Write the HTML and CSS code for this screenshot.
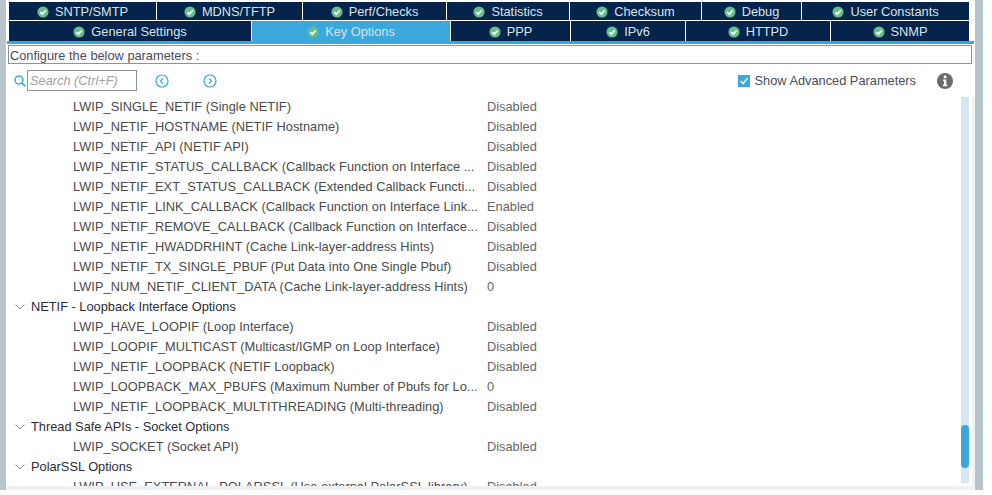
FILE: index.html
```html
<!DOCTYPE html>
<html>
  <head>
    <title>Key Options</title>
    <link rel="stylesheet" href="styles.css">
  </head>
  <body>
    <svg class="defs" width="0" height="0">
      <symbol id="ok" viewBox="0 0 14 14">
        <circle cx="7" cy="7" r="6.5" fill="#62c08a" />
        <path d="M3.8 7.2 L6.2 9.5 L10.3 4.9" fill="none" stroke="#fff" stroke-width="2" />
      </symbol>
    </svg>
    <div class="window">
      <div class="tabs tabs-top">
        <div class="tab t1"><svg class="ok"><use href="#ok" /></svg>SNTP/SMTP</div>
        <div class="tab t2"><svg class="ok"><use href="#ok" /></svg>MDNS/TFTP</div>
        <div class="tab t3"><svg class="ok"><use href="#ok" /></svg>Perf/Checks</div>
        <div class="tab t4"><svg class="ok"><use href="#ok" /></svg>Statistics</div>
        <div class="tab t5"><svg class="ok"><use href="#ok" /></svg>Checksum</div>
        <div class="tab t6"><svg class="ok"><use href="#ok" /></svg>Debug</div>
        <div class="tab t7"><svg class="ok"><use href="#ok" /></svg>User Constants</div>
      </div>
      <div class="tabs tabs-bottom">
        <div class="tab b1"><svg class="ok"><use href="#ok" /></svg>General Settings</div>
        <div class="tab b2 active"><svg class="ok"><use href="#ok" /></svg>Key Options</div>
        <div class="tab b3"><svg class="ok"><use href="#ok" /></svg>PPP</div>
        <div class="tab b4"><svg class="ok"><use href="#ok" /></svg>IPv6</div>
        <div class="tab b5"><svg class="ok"><use href="#ok" /></svg>HTTPD</div>
        <div class="tab b6"><svg class="ok"><use href="#ok" /></svg>SNMP</div>
      </div>
      <div class="tab-line"></div>
      <div class="configure">Configure the below parameters :</div>
      <div class="toolbar">
        <svg class="search-icon" viewBox="0 0 12 12">
          <circle cx="5" cy="5" r="3.9" fill="none" stroke="#3aa8dc" stroke-width="1.5" />
          <path d="M7.8 7.8 L11.2 11.2" stroke="#3aa8dc" stroke-width="1.7" />
        </svg>
        <div class="search">Search (Ctrl+F)</div>
        <svg class="nav nav-prev" viewBox="0 0 14 14">
          <circle cx="7" cy="7" r="6" fill="none" stroke="#3aa8dc" stroke-width="1.2" />
          <path d="M8 4.5 L5.5 7 L8 9.5" fill="none" stroke="#3aa8dc" stroke-width="1.2" />
        </svg>
        <svg class="nav nav-next" viewBox="0 0 14 14">
          <circle cx="7" cy="7" r="6" fill="none" stroke="#3aa8dc" stroke-width="1.2" />
          <path d="M6 4.5 L8.5 7 L6 9.5" fill="none" stroke="#3aa8dc" stroke-width="1.2" />
        </svg>
        <div class="spacer"></div>
        <div class="checkbox">
          <svg viewBox="0 0 12 12"><path d="M2.6 6 L5 8.6 L9.6 3.2" fill="none" stroke="#fff" stroke-width="1.5" /></svg>
        </div>
        <div class="advanced">Show Advanced Parameters</div>
        <svg class="info" viewBox="0 0 16 16">
          <circle cx="8" cy="8" r="8" fill="#6b6b6b" />
          <rect x="6.8" y="2.6" width="2.6" height="2.6" fill="#fff" />
          <path d="M5.9 6.6 H9.3 V11.8 H10.3 V13.2 H5.9 V11.8 H6.9 V8 H5.9 Z" fill="#fff" />
        </svg>
      </div>
      <div class="body-area">
        <div class="list">
          <div class="row"><span class="name">LWIP_SINGLE_NETIF (Single NETIF)</span><span class="value">Disabled</span></div>
          <div class="row"><span class="name">LWIP_NETIF_HOSTNAME (NETIF Hostname)</span><span class="value">Disabled</span></div>
          <div class="row"><span class="name">LWIP_NETIF_API (NETIF API)</span><span class="value">Disabled</span></div>
          <div class="row"><span class="name">LWIP_NETIF_STATUS_CALLBACK (Callback Function on Interface ...</span><span class="value">Disabled</span></div>
          <div class="row"><span class="name">LWIP_NETIF_EXT_STATUS_CALLBACK (Extended Callback Functi...</span><span class="value">Disabled</span></div>
          <div class="row"><span class="name">LWIP_NETIF_LINK_CALLBACK (Callback Function on Interface Link...</span><span class="value">Enabled</span></div>
          <div class="row"><span class="name">LWIP_NETIF_REMOVE_CALLBACK (Callback Function on Interface...</span><span class="value">Disabled</span></div>
          <div class="row"><span class="name">LWIP_NETIF_HWADDRHINT (Cache Link-layer-address Hints)</span><span class="value">Disabled</span></div>
          <div class="row"><span class="name">LWIP_NETIF_TX_SINGLE_PBUF (Put Data into One Single Pbuf)</span><span class="value">Disabled</span></div>
          <div class="row"><span class="name">LWIP_NUM_NETIF_CLIENT_DATA (Cache Link-layer-address Hints)</span><span class="value">0</span></div>
          <div class="group"><svg class="chevron" viewBox="0 0 10 6"><path d="M0.5 0.5 L5 5 L9.5 0.5" fill="none" stroke="#8a9299" /></svg>NETIF - Loopback Interface Options</div>
          <div class="row"><span class="name">LWIP_HAVE_LOOPIF (Loop Interface)</span><span class="value">Disabled</span></div>
          <div class="row"><span class="name">LWIP_LOOPIF_MULTICAST (Multicast/IGMP on Loop Interface)</span><span class="value">Disabled</span></div>
          <div class="row"><span class="name">LWIP_NETIF_LOOPBACK (NETIF Loopback)</span><span class="value">Disabled</span></div>
          <div class="row"><span class="name">LWIP_LOOPBACK_MAX_PBUFS (Maximum Number of Pbufs for Lo...</span><span class="value">0</span></div>
          <div class="row"><span class="name">LWIP_NETIF_LOOPBACK_MULTITHREADING (Multi-threading)</span><span class="value">Disabled</span></div>
          <div class="group"><svg class="chevron" viewBox="0 0 10 6"><path d="M0.5 0.5 L5 5 L9.5 0.5" fill="none" stroke="#8a9299" /></svg>Thread Safe APIs - Socket Options</div>
          <div class="row"><span class="name">LWIP_SOCKET (Socket API)</span><span class="value">Disabled</span></div>
          <div class="group"><svg class="chevron" viewBox="0 0 10 6"><path d="M0.5 0.5 L5 5 L9.5 0.5" fill="none" stroke="#8a9299" /></svg>PolarSSL Options</div>
          <div class="row"><span class="name">LWIP_USE_EXTERNAL_POLARSSL (Use external PolarSSL library)</span><span class="value">Disabled</span></div>
        </div>
        <div class="scrollbar">
          <div class="thumb"></div>
        </div>
      </div>
    </div>
  </body>
</html>
```

FILE: styles.css
```css
html,
body {
  margin: 0;
  height: 495px;
  background-color: #fff;
  overflow: hidden;
}

body {
  font-family: "Liberation Sans", Arial, sans-serif;
  font-size: 12.8px;
  padding-right: 9px;
  box-sizing: border-box;
}

.defs {
  display: block;
  height: 0;
}

.window {
  height: 490px;
  box-sizing: border-box;
  border-left: 6px solid #b8c4cb;
  border-right: 8px solid #b8c4cb;
  background-color: #fff;
  display: flex;
  flex-direction: column;
}

.tabs {
  display: flex;
  margin-left: 3px;
  margin-right: 6px;
  gap: 1px;
}

.tabs-top {
  margin-top: 2px;
  height: 18px;
  margin-bottom: 1px;
}

.tabs-bottom {
  height: 20px;
}

.tab {
  display: flex;
  align-items: center;
  justify-content: center;
  background-color: #04244b;
  color: #d9e2ea;
  white-space: nowrap;
  padding-top: 1px;
  box-sizing: border-box;
}

.tab.active {
  background-color: #3aa8dc;
}

.ok {
  width: 12px;
  height: 12px;
  margin-right: 6px;
}

.t1 { width: 147px; }
.t2 { width: 145px; }
.t3 { width: 143px; }
.t4 { width: 122px; }
.t5 { width: 131px; }
.t6 { width: 99px; }
.t7 { flex: 1; }

.b1 { width: 242px; }
.b2 { width: 198px; }
.b3 { width: 119px; }
.b4 { width: 114px; }
.b5 { width: 144px; }
.b6 { flex: 1; }

.tab-line {
  height: 3px;
  background-color: #3aa8dc;
  margin-left: 1px;
  margin-right: 1.5px;
}

.configure {
  margin: 1px 3px 0 2px;
  height: 19px;
  line-height: 19px;
  box-sizing: border-box;
  border: 1px solid #8c949a;
  padding-left: 1px;
  color: #4a4a5a;
}

.toolbar {
  display: flex;
  align-items: center;
  height: 33px;
  padding-left: 8px;
  padding-right: 22px;
}

.search-icon {
  width: 12px;
  height: 12px;
  margin-right: 1px;
}

.search {
  width: 110px;
  height: 21px;
  line-height: 19px;
  box-sizing: border-box;
  border: 1px solid #8c949a;
  padding-left: 2px;
  color: #a0a0a0;
  font-style: italic;
}

.nav {
  width: 14px;
  height: 14px;
}

.nav-prev {
  margin-left: 18px;
}

.nav-next {
  margin-left: 34px;
}

.spacer {
  flex: 1;
}

.checkbox {
  width: 12px;
  height: 12px;
  background-color: #3aa8dc;
  margin-right: 5px;
}

.checkbox svg {
  display: block;
  width: 12px;
  height: 12px;
}

.advanced {
  color: #4a4a5a;
}

.info {
  width: 16px;
  height: 16px;
  margin-left: 21px;
}

.body-area {
  flex: 1;
  min-height: 0;
  display: flex;
  border-bottom: 4px solid #eef0f3;
  border-right: 3px solid #f1f2f4;
  border-left: 1px solid #fff;
}

.list {
  flex: 1;
  overflow: hidden;
}

.row,
.group {
  height: 20px;
  line-height: 20px;
  display: flex;
  white-space: nowrap;
}

.row {
  color: #4a4a4a;
}

.name {
  width: 414px;
  margin-left: 66px;
  letter-spacing: 0.04px;
}

.value {
  color: #666;
}

.group {
  color: #2c2c38;
  align-items: center;
}

.chevron {
  width: 10px;
  height: 6px;
  margin-left: 8px;
  margin-right: 6px;
}

.scrollbar {
  width: 8px;
  margin-right: 3px;
  margin-bottom: 3px;
  background-color: #d6e6f4;
  padding-top: 328px;
  box-sizing: border-box;
}

.thumb {
  height: 43px;
  border-radius: 4px;
  background-color: #3aa8dc;
}
```
